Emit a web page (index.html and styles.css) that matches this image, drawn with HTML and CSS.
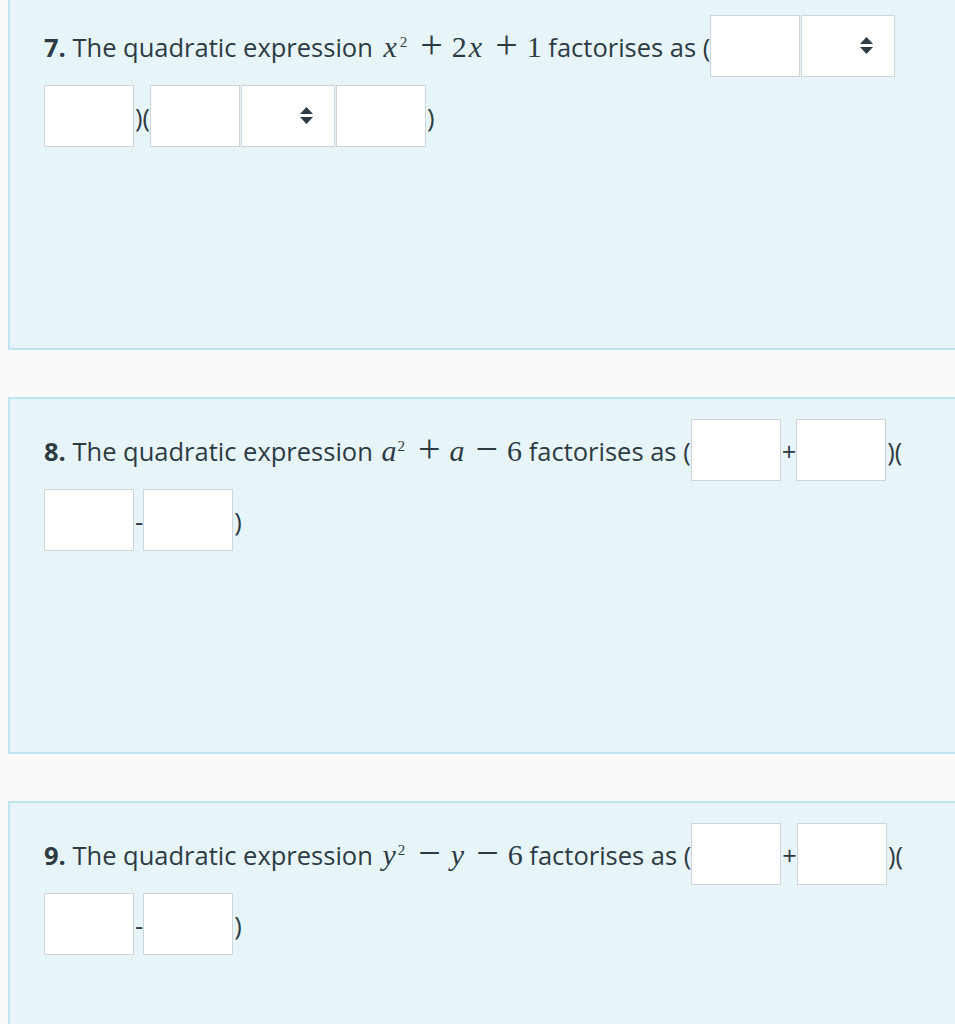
FILE: index.html
```html
<!DOCTYPE html>
<html lang="en">
<head>
  <meta charset="UTF-8">
  <meta name="viewport" content="width=device-width, initial-scale=1.0">
  <title>Factorising Quadratics</title>
  <link rel="stylesheet" href="styles.css">
</head>
<body>
  <div class="quiz">

    <div class="question first">
      <p class="prompt">
        <strong>7.</strong> The quadratic expression
        <span class="math"><i class="wide">x</i><sup>2</sup><span class="op">+</span>2<i class="wide">x</i><span class="op">+</span>1</span>
        factorises as (<input class="blank" type="text"><span class="picker"><select class="choice"><option></option><option>+</option><option>-</option></select><svg class="caret" width="13" height="17" viewBox="0 0 13 17"><path d="M6.5 0 L13 7 H0 Z M0 10 H13 L6.5 17 Z"/></svg></span><input class="blank" type="text">)(<input class="blank" type="text"><span class="picker"><select class="choice"><option></option><option>+</option><option>-</option></select><svg class="caret" width="13" height="17" viewBox="0 0 13 17"><path d="M6.5 0 L13 7 H0 Z M0 10 H13 L6.5 17 Z"/></svg></span><input class="blank" type="text">)
      </p>
    </div>

    <div class="question">
      <p class="prompt">
        <strong>8.</strong> The quadratic expression
        <span class="math"><i>a</i><sup>2</sup><span class="op">+</span><i>a</i><span class="op">&minus;</span>6</span>
        factorises as (<input class="blank" type="text">+<input class="blank" type="text">)(<input class="blank" type="text">-<input class="blank" type="text">)
      </p>
    </div>

    <div class="question">
      <p class="prompt">
        <strong>9.</strong> The quadratic expression
        <span class="math"><i class="mid">y</i><sup>2</sup><span class="op">&minus;</span><i class="mid">y</i><span class="op">&minus;</span>6</span>
        factorises as (<input class="blank" type="text">+<input class="blank" type="text">)(<input class="blank" type="text">-<input class="blank" type="text">)
      </p>
    </div>

  </div>
</body>
</html>
```

FILE: styles.css
```css
body {
  margin: 0;
  padding: 0 0 0 8px;
  background-color: #fafafa;
  font-family: "Open Sans", Arial, sans-serif;
  color: #2d3b45;
  overflow: hidden;
}
.quiz {
  margin-right: -12px;
}
.question {
  box-sizing: border-box;
  height: 357px;
  margin-bottom: 47px;
  padding: 20px 34px 0 34px;
  background-color: #e8f5f8;
  border: 2px solid #bfe4ed;
}
.question.first {
  margin-top: -7px;
}
.prompt {
  margin: 0;
  font-size: 25.5px;
  line-height: 1.4;
}
.prompt strong {
  font-weight: 700;
}
.math {
  font-family: "Liberation Serif", "Times New Roman", serif;
  font-size: 30px;
  white-space: nowrap;
  margin-left: 2px;
}
.math i {
  font-style: italic;
  margin-right: 2px;
}
.math i.wide {
  padding: 0 2px;
}
.math i.mid {
  padding: 0 1px;
}
.math sup {
  font-size: 15px;
  vertical-align: 10px;
  line-height: 0;
  margin-left: -1px;
  margin-right: 4px;
}
.op {
  font-size: 40px;
  line-height: 0;
  vertical-align: -1.5px;
  margin: 0 9px;
}
.blank,
.picker {
  box-sizing: border-box;
  display: inline-block;
  width: 90px;
  height: 62px;
  margin: 0 1px 8px 0;
  vertical-align: middle;
  background-color: #fff;
  border: 1px solid #cfd5d9;
  border-radius: 0;
  padding: 0 8px;
  font-family: inherit;
  font-size: 16px;
  color: #2d3b45;
  outline: none;
}
.picker {
  position: relative;
  width: 94px;
  padding: 0;
}
.choice {
  display: block;
  width: 100%;
  height: 100%;
  border: none;
  background: transparent;
  appearance: none;
  -webkit-appearance: none;
  font-family: inherit;
  font-size: 16px;
  padding: 0 10px;
  outline: none;
}
.caret {
  position: absolute;
  right: 21px;
  top: 21px;
  fill: #2d3b45;
  pointer-events: none;
}
```
